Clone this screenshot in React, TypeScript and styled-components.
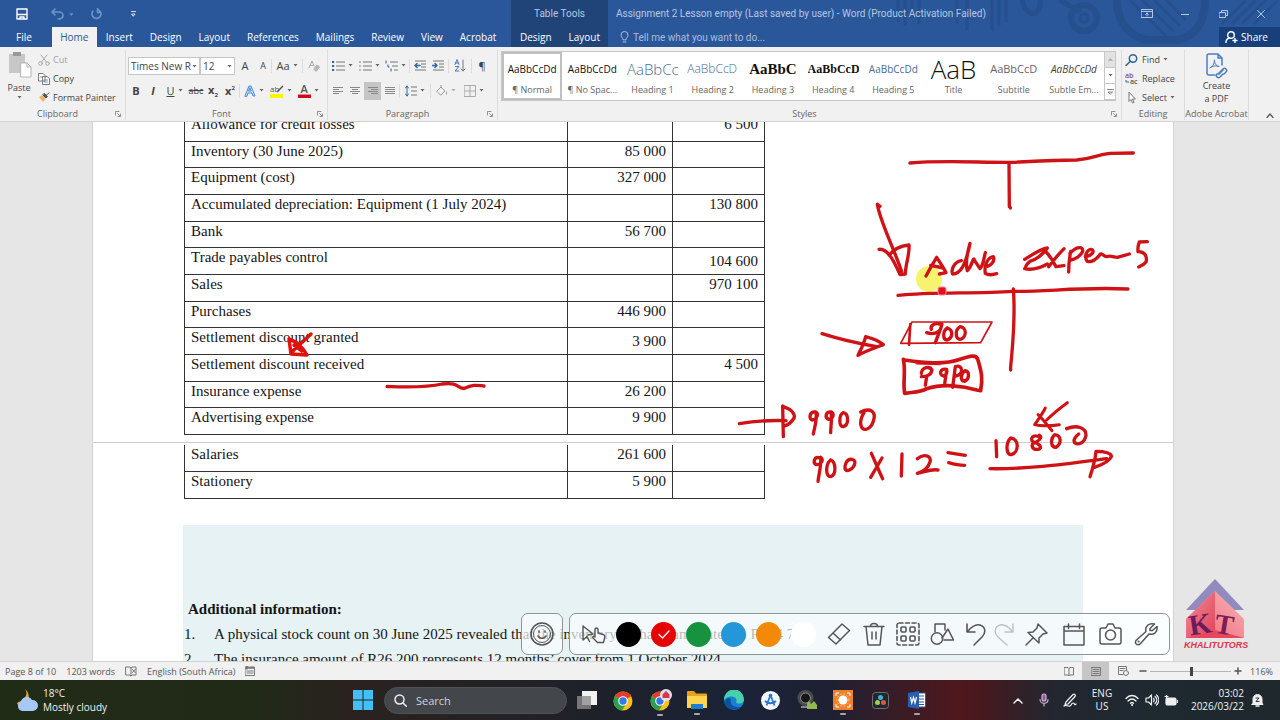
import React from "react";
import styled, { createGlobalStyle, css } from "styled-components";

const GlobalStyle = createGlobalStyle`
  * { box-sizing: border-box; }
  html, body { margin: 0; height: 100%; overflow: hidden; }
  #root { height: 100%; }
  body { font-family: "Open Sans", "Noto Sans", sans-serif; font-size: 9px; color: #444; background: #e6e6e6; }
  button, input, select { font: inherit; color: inherit; margin: 0; padding: 0; border: 0; background: none; outline: none; }
  button { display: inline-flex; align-items: center; justify-content: center; white-space: nowrap; }
  svg { display: block; flex: none; }
`;

const Screen = styled.div`
  display: flex;
  flex-direction: column;
  height: 100vh;
  overflow: hidden;
`;

/* ---------- header ---------- */
const Header = styled.header`
  position: relative;
  display: flex;
  flex: none;
  height: 47px;
  background: #2a579a;
  color: #fff;
`;
const HeaderArt = styled.svg`
  position: absolute;
  top: 0;
  right: 0;
`;
const HeaderBlock = styled.div<{ $width?: number; $dark?: boolean }>`
  position: relative;
  display: flex;
  flex-direction: column;
  ${(p) => (p.$width ? `flex: none; width: ${p.$width}px;` : "flex: 1; min-width: 0;")}
  background: ${(p) => (p.$dark ? "#204478" : "transparent")};
`;
const TitleRow = styled.div<{ $center?: boolean }>`
  display: flex;
  align-items: center;
  height: 27px;
  color: #b5c7e2;
  font-family: Roboto, "Open Sans", sans-serif;
  font-size: 10px;
  justify-content: ${(p) => (p.$center ? "center" : "flex-start")};
`;
const QuickAccess = styled.div`
  display: flex;
  align-items: center;
  gap: 12px;
  padding-left: 16px;
`;
const DocTitle = styled.span`
  flex: 1;
  padding-left: 8px;
  white-space: nowrap;
  overflow: hidden;
`;
const WindowButton = styled.button`
  width: 38px;
  height: 26px;
`;
const TabRow = styled.nav<{ $inset?: number }>`
  display: flex;
  height: 20px;
  gap: 1px;
  padding-left: ${(p) => p.$inset ?? 8}px;
`;
const Tab = styled.button<{ $active?: boolean; $file?: boolean }>`
  height: 20px;
  padding: 0 8px;
  font-size: 10px;
  min-width: ${(p) => (p.$active ? 45 : 0)}px;
  background: ${(p) => (p.$active ? "#f1f1f1" : "transparent")};
  color: ${(p) => (p.$active ? "#2a579a" : "#fff")};
  margin-right: ${(p) => (p.$file ? "11px" : "0")};
`;
const TellMe = styled.label`
  display: flex;
  flex: 1;
  align-items: center;
  gap: 4px;
  padding-left: 4px;
  color: #a9bddc;
  font-family: Roboto, "Open Sans", sans-serif;
  input {
    width: 240px;
    font-size: 10px;
  }
  input::placeholder {
    color: #a9bddc;
    opacity: 1;
  }
`;
const ShareButton = styled.button`
  width: 61px;
  gap: 3px;
  padding-right: 6px;
  background: #17407a;
  font-size: 10px;
`;

/* ---------- ribbon ---------- */
const Ribbon = styled.div`
  display: flex;
  flex: none;
  height: 75px;
  padding-top: 3px;
  background: #f1f1f1;
  border-bottom: 1px solid #d2d2d2;
`;
const Group = styled.section<{ $width?: number }>`
  display: flex;
  flex-direction: column;
  ${(p) => (p.$width ? `flex: none; width: ${p.$width}px;` : "flex: 1; min-width: 0;")}
  border-right: 1px solid #dcdcdc;
  height: 70px;
`;
const GroupBody = styled.div<{ $row?: boolean }>`
  flex: 1;
  min-height: 0;
  display: flex;
  flex-direction: ${(p) => (p.$row ? "row" : "column")};
`;
const GroupLabel = styled.div`
  display: flex;
  height: 13px;
  align-items: center;
  color: #666;
  span {
    flex: 1;
    text-align: center;
    white-space: nowrap;
  }
  svg {
    margin-right: 4px;
  }
`;
const PasteButton = styled.button`
  flex-direction: column;
  justify-content: flex-start;
  width: 36px;
  gap: 2px;
  padding: 1px 0 0 2px;
`;
const Stack = styled.div`
  display: flex;
  flex-direction: column;
`;
const Command = styled.button<{ $faded?: boolean }>`
  height: 19px;
  justify-content: flex-start;
  gap: 3px;
  padding-left: 2px;
  color: ${(p) => (p.$faded ? "#a0a0a0" : "#444")};
`;
const ToolRow = styled.div<{ $gap?: number }>`
  display: flex;
  align-items: center;
  height: 19px;
  margin-top: 6px;
  padding: 0 2px;
  gap: ${(p) => p.$gap ?? 2}px;
`;
const Combo = styled.div<{ $width: number }>`
  position: relative;
  width: ${(p) => p.$width}px;
  height: 18px;
  background: #fff;
  border: 1px solid #c6c6c6;
  select {
    appearance: none;
    width: 100%;
    height: 16px;
    padding: 0 8px 0 2px;
    overflow: hidden;
    font-size: 10px;
  }
  svg {
    position: absolute;
    right: 2px;
    top: 7px;
  }
`;
const Tool = styled.button<{ $on?: boolean; $width?: number }>`
  width: ${(p) => p.$width ?? 16}px;
  height: 18px;
  gap: 3px;
  background: ${(p) => (p.$on ? "#c5c5c5" : "transparent")};
`;
const Letter = styled.span<{ $bold?: boolean; $italic?: boolean; $underline?: boolean; $strike?: boolean }>`
  font-size: 11px;
  font-weight: ${(p) => (p.$bold ? 700 : 400)};
  font-style: ${(p) => (p.$italic ? "italic" : "normal")};
  text-decoration: ${(p) => (p.$underline ? "underline" : p.$strike ? "line-through" : "none")};
  sub, sup { font-size: 6px; line-height: 1; }
`;
const Small = styled(Letter)`
  font-size: 9px;
`;
const Rule = styled.i`
  width: 1px;
  height: 14px;
  background: #dcdcdc;
`;
const Gallery = styled.div`
  display: flex;
  height: 50px;
  margin: 1px 5px 0 3px;
  background: #fff;
  border: 1px solid #c6c6c6;
  overflow: hidden;
`;
const StyleItem = styled.button<{ $selected?: boolean }>`
  flex: 1 1 60px;
  min-width: 0;
  flex-direction: column;
  justify-content: flex-start;
  border: 2px solid ${(p) => (p.$selected ? "#c0c0c0" : "transparent")};
`;
const Preview = styled.span<{ $size: number; $color?: string; $serif?: boolean; $bold?: boolean; $light?: boolean; $italic?: boolean; $clip?: boolean }>`
  width: 51px;
  height: 28px;
  line-height: 30px;
  overflow: hidden;
  text-align: ${(p) => (p.$clip ? "left" : "center")};
  font-family: ${(p) => (p.$serif ? '"Liberation Serif", serif' : '"Open Sans", sans-serif')};
  font-size: ${(p) => p.$size}px;
  font-weight: ${(p) => (p.$bold ? 700 : p.$light ? 300 : 400)};
  font-style: ${(p) => (p.$italic ? "italic" : "normal")};
  color: ${(p) => p.$color ?? "#111"};
`;
const StyleName = styled.span`
  line-height: 16px;
  color: #666;
`;
const GalleryScroll = styled.div`
  display: flex;
  flex-direction: column;
  width: 11px;
  border-left: 1px solid #c6c6c6;
  button {
    flex: 1;
    border-bottom: 1px solid #c6c6c6;
  }
  button:first-child {
    background: #e2e2e2;
  }
`;
const PdfButton = styled.button`
  flex-direction: column;
  padding-top: 3px;
  line-height: 13px;
`;
const Collapse = styled.button`
  width: 20px;
  height: 12px;
  margin: 59px 0 0 11px;
`;

/* ---------- document ---------- */
const Workspace = styled.main`
  position: relative;
  flex: 1;
  min-height: 0;
  overflow: hidden;
  background: #e6e6e6;
`;
const Page = styled.article`
  margin: 0 106px 0 92px;
  height: 100%;
  background: #fff;
  border: solid #d4d4d4;
  border-width: 0 1px;
  overflow: hidden;
  color: #151515;
  font-family: "Liberation Serif", "Times New Roman", serif;
  font-size: 15px;
`;
const Ledger = styled.table<{ $first?: boolean }>`
  width: 581px;
  height: ${(p) => (p.$first ? 321 : 54)}px;
  margin: ${(p) => (p.$first ? "-8px" : "2px")} 0 0 91px;
  border-collapse: collapse;
  table-layout: fixed;
  td {
    border: 1px solid #333;
    padding: 0 6px 5px;
    vertical-align: top;
    line-height: 18px;
  }
  ${(p) =>
    !p.$first &&
    css`
      tr:first-child td {
        border-top: 0;
      }
    `}
`;
const Amount = styled.td<{ $low?: boolean }>`
  && {
    text-align: right;
    padding-top: ${(p) => (p.$low ? 4 : 0)}px;
    padding-bottom: ${(p) => (p.$low ? 1 : 5)}px;
  }
`;
const PageBreak = styled.hr`
  height: 1px;
  margin: 7px 0 0;
  border: 0;
  background: #cfcfcf;
`;
const Info = styled.section`
  margin: 26px 90px 0 90px;
  padding: 72px 0 0 5px;
  height: 200px;
  background: #e6f2f4;
  h2 {
    margin: 0;
    font-size: 15px;
    line-height: 25px;
  }
  ol {
    margin: 0 0 0 -4px;
    padding: 0;
    list-style: none;
  }
  li {
    display: flex;
    line-height: 25px;
    white-space: nowrap;
  }
  li span {
    width: 30px;
  }
`;
const Ink = styled.svg`
  position: absolute;
  top: 0;
  left: 0;
  pointer-events: none;
  fill: none;
  stroke: #cf1216;
  stroke-linecap: round;
  stroke-linejoin: round;
`;

/* ---------- annotation tools ---------- */
const Annotate = styled.div`
  position: absolute;
  right: 110px;
  bottom: 6px;
  display: flex;
  gap: 6px;
  color: #555;
`;
const Panel = styled.div`
  display: flex;
  align-items: center;
  justify-content: center;
  height: 42px;
  min-width: 42px;
  padding: 0 7px;
  border: 1px solid #8d9596;
  border-radius: 7px;
  background: rgba(250, 254, 255, 0.7);
`;
const Pen = styled.button<{ $width?: number }>`
  width: ${(p) => p.$width ?? 34}px;
  height: 32px;
`;
const Swatch = styled.label<{ $color: string }>`
  display: grid;
  place-items: center;
  width: 35px;
  height: 32px;
  input,
  svg {
    grid-area: 1 / 1;
  }
  input {
    appearance: none;
    width: 25px;
    height: 25px;
    border-radius: 50%;
    background: ${(p) => p.$color};
  }
`;
const Logo = styled.svg`
  position: absolute;
  right: 28px;
  bottom: 8px;
`;

/* ---------- status bar ---------- */
const StatusBar = styled.footer`
  display: flex;
  flex: none;
  align-items: center;
  height: 19px;
  padding: 0 7px 0 5px;
  background: #f1f1f1;
  border-top: 1px solid #d2d2d2;
  color: #555;
`;
const StatusLeft = styled.div`
  display: flex;
  flex: 1;
  align-items: center;
  gap: 10px;
  white-space: nowrap;
`;
const ViewButton = styled.button<{ $on?: boolean; $width?: number }>`
  width: ${(p) => p.$width ?? 27}px;
  height: 18px;
  background: ${(p) => (p.$on ? "#c6c6c6" : "transparent")};
`;
const ZoomStep = styled.button`
  width: 10px;
  height: 16px;
`;
const ZoomSlider = styled.input`
  && {
    appearance: none;
    width: 81px;
    height: 12px;
    margin: 0 2px;
    background: linear-gradient(#b5b5b5, #b5b5b5) center / 100% 1px no-repeat;
  }
  &::-webkit-slider-thumb {
    appearance: none;
    width: 3px;
    height: 9px;
    background: #444;
  }
`;
const ZoomValue = styled.span`
  width: 30px;
  text-align: right;
`;

/* ---------- taskbar ---------- */
const Taskbar = styled.footer`
  display: grid;
  grid-template-columns: 1fr auto 1fr;
  align-items: center;
  flex: none;
  height: 40px;
  color: #f2f2f2;
  font-size: 10px;
  background: linear-gradient(90deg, #212c17 0%, #202a17 20%, #29221f 27%, #262223 36%, #1d212b 48%, #1b2338 58%, #1f2032 65%, #381c26 70%, #4f181d 75%, #45191f 77%, #23262f 82%, #1e2930 90%, #1e282d 100%);
`;
const Weather = styled.button`
  justify-self: start;
  gap: 5px;
  padding-left: 16px;
  text-align: left;
  line-height: 14px;
`;
const Center = styled.div`
  display: flex;
  align-items: center;
  padding-left: 8px;
`;
const SearchPill = styled.label`
  display: flex;
  align-items: center;
  gap: 9px;
  width: 183px;
  height: 27px;
  margin: 0 2px 0 11px;
  padding-left: 9px;
  border-radius: 14px;
  background: #43474b;
  border: 1px solid #4f5254;
  font-size: 11px;
  input {
    width: 140px;
  }
  input::placeholder {
    color: #d2d2d2;
    opacity: 1;
  }
`;
const AppGrid = styled.div`
  display: grid;
  grid-template-columns: repeat(10, 1fr);
  width: 366px;
`;
const AppButton = styled.button<{ $running?: boolean }>`
  flex-direction: column;
  height: 40px;
  gap: 3px;
  padding-top: 5px;
  &::after {
    content: "";
    width: 6px;
    height: 2px;
    border-radius: 1px;
    background: ${(p) => (p.$running ? "#a5a9ad" : "transparent")};
  }
`;
const Tray = styled.div`
  display: flex;
  align-items: center;
  justify-self: end;
  padding-right: 10px;
  line-height: 13px;
`;
const TrayButton = styled.button<{ $width?: number }>`
  width: ${(p) => p.$width ?? 26}px;
  height: 32px;
`;
const Clock = styled.button`
  width: 63px;
  text-align: right;
  justify-content: flex-end;
  white-space: pre;
`;

/* ---------- icons ---------- */
type LineProps = { w: number; h?: number; box?: string; sw?: number; color?: string; children: React.ReactNode };
const Line = ({ w, h, box, sw = 1, color = "currentColor", children }: LineProps) => (
  <svg width={w} height={h ?? w} viewBox={box ?? `0 0 ${w} ${h ?? w}`} fill="none" stroke={color} strokeWidth={sw} strokeLinecap="round" strokeLinejoin="round" aria-hidden="true">
    {children}
  </svg>
);
const Caret = ({ color = "#666" }: { color?: string }) => (
  <svg width="5" height="3" viewBox="0 0 5 3" aria-hidden="true">
    <path d="M.5 0h4l-2 2.500z" fill={color} />
  </svg>
);
const Launcher = () => (
  <Line w={6} sw={0.8} color="#777">
    <path d="M.5 4V.5H4M2.500 2.500 5 5M5.500 3v2.500H3" />
  </Line>
);
const Bullets = ({ kind }: { kind: number }) => (
  <Line w={13} h={12} color="#777">
    <path d={kind === 2 ? "M5 2h8M7 6h6M9 10h4" : "M4 2h9M4 6h9M4 10h9"} strokeLinecap="butt" />
    <path d={kind === 2 ? "M1 1v2M3 5v2h1M6 9v2" : "M.7 2h.6M.7 6h.6M.7 10h.6"} stroke="#2a579a" strokeWidth={kind === 0 ? 2 : 1} />
  </Line>
);
const Indent = ({ right }: { right?: boolean }) => (
  <Line w={13} h={12} color="#777">
    <path d="M1 1h11M7 4h5M7 7h5M1 10h11" strokeLinecap="butt" />
    <path d={right ? "M0 5.500h5M3 3.500l2 2-2 2" : "M6 5.500H1M3 3.500l-2 2 2 2"} stroke="#2a6aa8" strokeWidth="1.500" />
  </Line>
);
const Align = ({ kind }: { kind: "l" | "c" | "r" | "j" }) => {
  const d = {
    l: "M1 1.500h10M1 3.500h6M1 5.500h10M1 7.500h6",
    c: "M1 1.500h10M3 3.500h6M1 5.500h10M3 7.500h6",
    r: "M1 1.500h10M4 3.500h7M1 5.500h10M4 7.500h7",
    j: "M1 1.500h10M1 3.500h10M1 5.500h10M1 7.500h10",
  }[kind];
  return (
    <Line w={12} h={10} color="#888">
      <path d={d} strokeLinecap="butt" />
    </Line>
  );
};
const Chrome = ({ badge }: { badge?: boolean }) => (
  <svg width="23" height="22" viewBox="0 0 23 22" aria-hidden="true">
    <circle cx="11" cy="12" r="9.500" fill="#fbc116" />
    <path d="M11 12 2.800 7.200A9.500 9.500 0 0 1 19.200 7.200z" fill="#e33b2e" />
    <path d="M2.800 7.200A9.500 9.500 0 0 0 10 21.400L14 15 11 12z" fill="#2da04e" />
    <circle cx="11" cy="12" r="4.800" fill="#fff" />
    <circle cx="11" cy="12" r="3.700" fill="#3478e5" />
    {badge && (
      <g>
        <circle cx="17" cy="6" r="6" fill="#e9e2e5" />
        <path d="m17 1.500 3.500 4h-7z" fill="#8580b0" />
        <path d="M13.500 5.500 17 3l3.500 2.500V9h-7z" fill="#dc3450" />
      </g>
    )}
  </svg>
);

type StyleDef = { name: string; text: string; size: number; color?: string; serif?: boolean; bold?: boolean; light?: boolean; italic?: boolean; clip?: boolean };
const STYLES: StyleDef[] = [
  { name: "¶ Normal", text: "AaBbCcDd", size: 10 },
  { name: "¶ No Spac...", text: "AaBbCcDd", size: 10 },
  { name: "Heading 1", text: "AaBbCc", size: 15, color: "#4a6d94", light: true, clip: true },
  { name: "Heading 2", text: "AaBbCcD", size: 12, color: "#4a6d94", light: true, clip: true },
  { name: "Heading 3", text: "AaBbC", size: 15, serif: true, bold: true },
  { name: "Heading 4", text: "AaBbCcD", size: 12, serif: true, bold: true, clip: true },
  { name: "Heading 5", text: "AaBbCcDd", size: 10, color: "#4a6d94" },
  { name: "Title", text: "AaB", size: 26, light: true },
  { name: "Subtitle", text: "AaBbCcD", size: 11, color: "#666" },
  { name: "Subtle Em...", text: "AaBbCcDd", size: 10, color: "#444", italic: true },
];

type Entry = { name: string; debit?: string; credit?: string; low?: boolean };
const ENTRIES: Entry[] = [
  { name: "Allowance for credit losses", credit: "6 500" },
  { name: "Inventory (30 June 2025)", debit: "85 000" },
  { name: "Equipment (cost)", debit: "327 000" },
  { name: "Accumulated depreciation: Equipment (1 July 2024)", credit: "130 800" },
  { name: "Bank", debit: "56 700" },
  { name: "Trade payables control", credit: "104 600", low: true },
  { name: "Sales", credit: "970 100" },
  { name: "Purchases", debit: "446 900" },
  { name: "Settlement discount granted", debit: "3 900", low: true },
  { name: "Settlement discount received", credit: "4 500" },
  { name: "Insurance expense", debit: "26 200" },
  { name: "Advertising expense", debit: "9 900" },
];
const ENTRIES_NEXT: Entry[] = [
  { name: "Salaries", debit: "261 600" },
  { name: "Stationery", debit: "5 900" },
];

const LedgerTable = ({ rows, first }: { rows: Entry[]; first?: boolean }) => (
  <Ledger $first={first}>
    <colgroup>
      <col />
      <col width="105" />
      <col width="92" />
    </colgroup>
    <tbody>
      {rows.map((r) => (
        <tr key={r.name}>
          <td>{r.name}</td>
          <Amount $low={r.low}>{r.debit}</Amount>
          <Amount $low={r.low}>{r.credit}</Amount>
        </tr>
      ))}
    </tbody>
  </Ledger>
);

const InkLayer = () => (
  <Ink width="1280" height="539" viewBox="0 122 1280 539" aria-hidden="true">
    <circle cx="929" cy="279" r="13" fill="#f6f04a" fillOpacity=".8" stroke="none" />
    <g transform="translate(800 140) scale(.33333)" strokeWidth="10">
      <path d="M330 69C430 60 540 68 640 67C700 64 760 60 830 60C880 56 890 44 930 40L1000 39" />
      <path d="M627 68 628 200M631 202v2" />
      <path d="M240 199 232 193C240 245 280 320 305 395" />
      <path d="M237 328C265 325 285 370 300 404L316 402C316 375 330 340 327 315C300 318 280 328 268 346" />
      <path d="M378 408C390 385 402 365 410 352C420 368 432 385 438 398L418 402M392 376 430 384" />
      <path d="M484 362C462 366 452 390 458 402C480 402 496 380 510 310C500 345 496 372 502 392C520 374 518 346 524 362L540 386C550 376 552 352 556 338M556 380C572 380 586 362 580 350C562 352 552 378 556 400C567 408 580 404 590 401" />
      <path d="M674 358C700 342 724 325 742 324C728 345 705 360 690 364M674 386C700 392 724 382 742 372M690 364C680 372 676 380 676 386" />
      <path d="M738 336C752 350 762 368 768 380L792 377M792 326C776 340 758 366 746 380" />
      <path d="M812 334C808 355 806 375 806 396M810 340C830 318 850 318 848 334C842 348 826 358 812 360M856 350C876 348 886 332 874 328C858 330 852 352 862 364C878 368 888 358 898 346C904 334 912 352 922 350C930 345 940 352 952 352L988 342" />
      <path d="M1042 305 1018 306C1012 320 1014 330 1014 335C1036 334 1042 352 1038 366C1032 374 1024 378 1016 381" />
      <path d="M294 466C400 455 520 462 640 454C740 456 840 440 984 447" />
      <path d="M640 447C646 520 640 600 632 680L632 690" />
    </g>
    <rect x="938" y="287" width="8" height="8" rx="2" fill="#e80f1b" stroke="#f08c94" strokeWidth="1" />
    <g transform="translate(730 310) scale(.33333)" strokeWidth="10">
      <path d="M276 71C320 85 370 98 440 110M384 136C396 112 404 94 407 80C430 86 450 96 460 104C440 112 405 124 384 136" />
      <path d="M512 100 546 36H786L752 98Z" strokeWidth="5" />
      <path d="M541 42 537 104" strokeWidth="8" />
      <path d="M590 68C606 74 628 70 632 56L636 42M630 42C612 38 600 48 604 58M634 50 616 98M652 54C638 62 638 88 650 90C668 86 672 60 652 54M690 50C674 60 676 86 690 88C710 84 712 52 690 50" strokeWidth="10" />
      <path d="M520 148C528 180 518 220 524 250M524 150C580 158 640 166 690 148C720 138 740 132 744 150C752 180 760 200 752 242L740 240C700 228 640 220 590 236C570 248 550 246 524 250M560 158 630 160" strokeWidth="11" />
      <path d="M574 190C576 170 600 168 606 180C604 196 588 200 574 200M590 200 586 226M650 178C630 174 626 194 640 198C650 196 652 188 650 178C648 200 644 212 644 226M668 232 676 170C698 162 704 192 676 198M706 182C690 192 690 212 704 214C720 206 718 184 706 182" strokeWidth="10" />
      <path d="M28 341C70 334 120 330 168 332M158 288 160 380M160 290C190 300 200 318 188 330C180 342 170 346 164 348" />
      <path d="M256 306C238 304 236 326 246 330C262 328 266 312 258 306C262 330 254 350 250 372M304 306C286 304 284 324 296 328C312 326 312 310 304 306C306 334 302 350 302 368M340 308C326 314 326 350 340 350C356 346 358 312 340 308M392 306C420 292 440 304 430 334C422 360 400 364 394 350C388 336 396 318 402 308" />
      <path d="M270 444C252 438 248 458 258 464C274 464 282 450 272 442C274 470 266 494 264 514M302 450C286 462 286 500 302 500C320 494 318 456 302 450M366 448C346 446 340 476 350 482C372 480 384 450 366 448M424 430C438 460 446 482 458 506M456 444 422 502M516 432 514 498M562 446C580 430 606 436 600 456C594 476 576 486 562 490C584 486 604 476 624 480M654 428 706 436M656 458C670 462 690 466 704 466" />
      <path d="M798 392 800 440M842 384C826 400 828 434 844 434C868 426 868 386 842 384M930 382C908 370 898 388 910 396C930 402 938 412 926 418C904 420 900 402 918 396C932 390 936 380 928 376M974 374C960 386 962 412 978 412C996 400 994 376 974 374M1010 356C1040 344 1068 352 1068 376C1064 400 1044 406 1034 398C1028 390 1038 378 1046 372" />
      <path d="M780 476C900 478 1020 460 1130 446M1080 500C1090 470 1096 446 1098 424C1124 424 1146 430 1144 440C1136 458 1110 466 1094 472" />
      <path d="M1012 278C990 294 970 310 950 330M946 294C936 314 922 332 914 344C936 350 960 348 988 344M924 314C936 324 952 346 966 362" strokeWidth="9" />
    </g>
    <path d="M311 334C304 341 298 345 292 352M289 339 291 354 307 355C303 348 298 342 289 339M294 345 302 351" strokeWidth="3.500" stroke="#e0100c" />
    <path d="M387 386.500C405 387 425 388 442 384C460 382 456 388 464 388.500C474 384 478 385.500 484 386" strokeWidth="3.300" />
  </Ink>
);

export default function App() {
  return (
    <Screen>
      <GlobalStyle />
      <Header>
        <HeaderArt width="400" height="47" viewBox="880 0 400 47" fill="none" stroke="#264f8e" aria-hidden="true">
          <path d="M898 0v22M905 0v26M912 0v18M919 0v24M957 0v24M967 0v30M992 0v30M999 0v26M1006 0v22" strokeWidth="3" />
          <path d="M1022 0c4 20 20 16 18 0M1060 0l20 12" strokeWidth="5" />
          <circle cx="1084" cy="18" r="13" strokeWidth="6" />
          <circle cx="1084" cy="18" r="4" strokeWidth="3" />
          <path d="M1117 0c0 24 14 37 30 40h30c18-3 28-18 28-40" strokeWidth="8" />
          <path d="M1130 0l36 36M1142 0l32 32M1154 0l26 26M1166 0l20 20M1232 24l24-24M1222 24l24-24M1242 24l24-24M1254 24l24-24" strokeWidth="3" />
        </HeaderArt>
        <HeaderBlock $width={511}>
          <TitleRow>
            <QuickAccess>
              <button aria-label="Save">
                <Line w={12} color="#fff" sw={1.4}><path d="M1 1h10v10H1zM1 6.500h10M4 11V9h4v2" /></Line>
              </button>
              <button aria-label="Undo">
                <Line w={34} h={12} color="#6f93c8" sw={1.6}><path d="M15 1 12 4l3 3M12 4h7a3.500 3 0 0 1 0 7h-1" /><path d="M30 5.500h3l-1.500 2z" fill="#6f93c8" strokeWidth=".5" /></Line>
              </button>
              <button aria-label="Repeat">
                <Line w={20} h={12} color="#6f93c8" sw={1.6}><path d="M11.500 1.500A4.500 4.500 0 1 1 7 3M11.500.500v4H15" /></Line>
              </button>
              <button aria-label="Customize Quick Access Toolbar">
                <Line w={18} h={6} color="#fff"><path d="M13.500.500h4M14 3h3l-1.500 2z" strokeWidth=".8" /></Line>
              </button>
            </QuickAccess>
          </TitleRow>
          <TabRow>
            <Tab $file>File</Tab>
            <Tab $active>Home</Tab>
            {["Insert", "Design", "Layout", "References", "Mailings", "Review", "View", "Acrobat"].map((t) => (
              <Tab key={t}>{t}</Tab>
            ))}
          </TabRow>
        </HeaderBlock>
        <HeaderBlock $width={97} $dark>
          <TitleRow $center>Table Tools</TitleRow>
          <TabRow $inset={1}>
            <Tab>Design</Tab>
            <Tab>Layout</Tab>
          </TabRow>
        </HeaderBlock>
        <HeaderBlock>
          <TitleRow>
            <DocTitle>Assignment 2 Lesson empty (Last saved by user) - Word (Product Activation Failed)</DocTitle>
            <WindowButton aria-label="Ribbon Display Options">
              <Line w={12} h={9}><path d="M.5.500h11v8H.5zM.5 2.500h11M6 7V4M4.500 5.500 6 4l1.500 1.500" /></Line>
            </WindowButton>
            <WindowButton aria-label="Minimize"><Line w={8} h={4}><path d="M0 2.500h8" /></Line></WindowButton>
            <WindowButton aria-label="Restore"><Line w={9} h={8}><path d="M.5 2.500h6v5h-6zM2.500 2.500v-2h6v5h-2" /></Line></WindowButton>
            <WindowButton aria-label="Close"><Line w={8}><path d="m.5.500 7 7M7.500.500l-7 7" /></Line></WindowButton>
          </TitleRow>
          <TabRow>
            <TellMe>
              <Line w={9} h={12}><path d="M3 8.500C3 7 1 6 1 4a3.500 3.500 0 0 1 7 0c0 2-2 3-2 4.500zM3 11h3" /></Line>
              <input aria-label="Tell me what you want to do" placeholder="Tell me what you want to do..." />
            </TellMe>
            <ShareButton>
              <Line w={13} h={12} sw={1.4}><circle cx="6" cy="4" r="3.300" /><path d="M1 11.500C1 9 2.500 7.500 4.500 7M8 9.500h4M10 7.500v4" /></Line>
              Share
            </ShareButton>
          </TabRow>
        </HeaderBlock>
      </Header>

      <Ribbon>
        <Group $width={126}>
          <GroupBody $row>
            <PasteButton>
              <Line w={26} h={28}>
                <path d="M3 3h16v19H3z" fill="#c9c6c6" stroke="none" />
                <path d="M7 1h8v4H7z" fill="#999" stroke="none" />
                <path d="M15 12h6l4 4v10H15z" fill="#fff" stroke="#b5b5b5" />
                <path d="M21 12v4h4" stroke="#b5b5b5" />
              </Line>
              Paste
              <Caret />
            </PasteButton>
            <Stack>
              <Command $faded>
                <Line w={12} color="#aaa"><circle cx="2.500" cy="9.500" r="1.800" /><circle cx="9.500" cy="9.500" r="1.800" /><path d="M3.500 8 9 1M8.500 8 3 1" /></Line>
                Cut
              </Command>
              <Command>
                <Line w={12} color="#777"><path d="M1 .500h4l2 2V8H1zM5 3.500h4l2.500 2v6H5z" fill="#fff" /><path d="M6.500 7h3M6.500 9h3M2.500 4h2" stroke="#4a7ab5" strokeWidth=".8" /></Line>
                Copy
              </Command>
              <Command>
                <Line w={12} h={11}><path d="m1 5 4-2 3 3-3 4z" fill="#e9b572" stroke="none" /><path d="m5 3 3 3 1.500-1.500-3-3zM8.500 3 11 1" fill="#555" stroke="#555" /></Line>
                Format Painter
              </Command>
            </Stack>
          </GroupBody>
          <GroupLabel><span>Clipboard</span><Launcher /></GroupLabel>
        </Group>

        <Group $width={202}>
          <GroupBody>
            <ToolRow $gap={0}>
              <Combo $width={72}><select aria-label="Font"><option>Times New Roman</option></select><Caret /></Combo>
              <Combo $width={35}><select aria-label="Font size"><option>12</option></select><Caret /></Combo>
              <Tool $width={20} aria-label="Increase font size"><Letter>A</Letter></Tool>
              <Tool aria-label="Decrease font size"><Small>A</Small></Tool>
              <Rule />
              <Tool $width={30} aria-label="Change case"><Letter>Aa</Letter><Caret /></Tool>
              <Rule />
              <Tool $width={22} aria-label="Clear formatting">
                <Line w={12} color="#aaa"><path d="m1 8 3-7 2 5M2 5.500h3" /><path d="m6 9 3-4 2.500 2-3 4z" fill="#c0b5c5" /></Line>
              </Tool>
            </ToolRow>
            <ToolRow $gap={1}>
              <Tool aria-label="Bold"><Letter $bold>B</Letter></Tool>
              <Tool aria-label="Italic"><Letter $italic $bold>I</Letter></Tool>
              <Tool $width={25} aria-label="Underline"><Letter $underline>U</Letter><Caret /></Tool>
              <Tool aria-label="Strikethrough"><Small $strike>abc</Small></Tool>
              <Tool aria-label="Subscript"><Letter $bold>x<sub>2</sub></Letter></Tool>
              <Tool aria-label="Superscript"><Letter $bold>x<sup>2</sup></Letter></Tool>
              <Rule />
              <Tool $width={26} aria-label="Text effects">
                <Line w={12} color="#4a86cc" sw={1}><path d="M1 11 5 1h2l4 10H9L8 8H4l-1 3zM4.800 6h2.400L6 3z" fill="#dbe9f8" /></Line>
                <Caret />
              </Tool>
              <Tool $width={26} aria-label="Highlight color">
                <svg width="14" height="14" viewBox="0 0 14 14" aria-hidden="true"><path d="M0 10h13v4H0z" fill="#fdf500" /><text x="0" y="8" fontSize="8" fill="#555">ab</text><path d="m7 8 6-6" stroke="#555" strokeWidth="1.500" /></svg>
                <Caret />
              </Tool>
              <Tool $width={26} aria-label="Font color">
                <svg width="13" height="14" viewBox="0 0 13 14" aria-hidden="true"><path d="M0 10.500h13V14H0z" fill="#d00c12" /><text x="2.500" y="9" fontSize="11" fontWeight="600" fill="#555">A</text></svg>
                <Caret />
              </Tool>
            </ToolRow>
          </GroupBody>
          <GroupLabel><span>Font</span><Launcher /></GroupLabel>
        </Group>

        <Group $width={170}>
          <GroupBody>
            <ToolRow $gap={2}>
              <Tool $width={25} aria-label="Bullets"><Bullets kind={0} /><Caret /></Tool>
              <Tool $width={24} aria-label="Numbering"><Bullets kind={1} /><Caret /></Tool>
              <Tool $width={24} aria-label="Multilevel list"><Bullets kind={2} /><Caret /></Tool>
              <Rule />
              <Tool aria-label="Decrease indent"><Indent /></Tool>
              <Tool aria-label="Increase indent"><Indent right /></Tool>
              <Rule />
              <Tool $width={18} aria-label="Sort">
                <Line w={12} h={13} color="#4a7ab5"><path d="m1 5.500 2-5 2 5M1.500 4h3M1.500 7.500h3.500l-4 4.500h4" /><path d="M9 1v11M7 10l2 2 2-2" stroke="#777" /></Line>
              </Tool>
              <Rule />
              <Tool aria-label="Show paragraph marks"><Letter>¶</Letter></Tool>
            </ToolRow>
            <ToolRow $gap={1}>
              <Tool aria-label="Align left"><Align kind="l" /></Tool>
              <Tool aria-label="Center"><Align kind="c" /></Tool>
              <Tool $on $width={17} aria-label="Align right"><Align kind="r" /></Tool>
              <Tool aria-label="Justify"><Align kind="j" /></Tool>
              <Rule />
              <Tool $width={28} aria-label="Line spacing">
                <Line w={12} color="#777"><path d="M6 2h6M6 6h6M6 10h6" strokeLinecap="butt" /><path d="M2 1v10M.5 3 2 1l1.500 2M.5 9 2 11l1.500-2" stroke="#2a6aa8" /></Line>
                <Caret />
              </Tool>
              <Rule />
              <Tool $width={28} aria-label="Shading">
                <Line w={12} color="#999"><path d="m1 6 4-4 4 4-4 4zM5 2V0M10.500 7v2" /></Line>
                <Caret color="#aaa" />
              </Tool>
              <Tool $width={26} aria-label="Borders">
                <Line w={12} color="#aaa"><path d="M.5.500h11v11H.5zM6 .500v11M.5 6h11" /></Line>
                <Caret />
              </Tool>
            </ToolRow>
          </GroupBody>
          <GroupLabel><span>Paragraph</span><Launcher /></GroupLabel>
        </Group>

        <Group>
          <GroupBody>
            <Gallery>
              {STYLES.map((s, i) => (
                <StyleItem key={s.name} $selected={i === 0}>
                  <Preview $size={s.size} $color={s.color} $serif={s.serif} $bold={s.bold} $light={s.light} $italic={s.italic} $clip={s.clip}>{s.text}</Preview>
                  <StyleName>{s.name}</StyleName>
                </StyleItem>
              ))}
              <GalleryScroll>
                <button aria-label="Previous styles"><Line w={5} h={3} sw={0.5} color="#aaa"><path d="M.5 2.500h4l-2-2z" fill="#aaa" /></Line></button>
                <button aria-label="Next styles"><Caret /></button>
                <button aria-label="More styles"><Line w={7} h={6} color="#666" sw={0.8}><path d="M.5.500h6M1.500 3h4l-2 2z" /></Line></button>
              </GalleryScroll>
            </Gallery>
          </GroupBody>
          <GroupLabel><span>Styles</span><Launcher /></GroupLabel>
        </Group>

        <Group $width={63}>
          <GroupBody>
            <Command>
              <Line w={15} h={12} color="#2f6299" sw={1.5}><circle cx="9" cy="4.500" r="3.700" /><path d="m6 7.500-4 4" /></Line>
              Find<Caret />
            </Command>
            <Command>
              <svg width="15" height="13" viewBox="0 0 15 13" aria-hidden="true"><text x="1" y="6" fontSize="7" fontWeight="600" fill="#7a4a98">ab</text><text x="6" y="12" fontSize="7" fontWeight="600" fill="#555">ac</text><path d="M2 8v2h3" fill="none" stroke="#2a6aa8" /></svg>
              Replace
            </Command>
            <Command>
              <Line w={15} h={12} color="#777"><path d="M5 .500v9l2-2 1.500 3.500 1.500-.7L8.500 7H11z" fill="#fff" /></Line>
              Select<Caret />
            </Command>
          </GroupBody>
          <GroupLabel><span>Editing</span></GroupLabel>
        </Group>

        <Group $width={64}>
          <GroupBody>
            <PdfButton>
              <Line w={22} h={26} color="#4a7fc0" sw={1.5}>
                <path d="M9 22H3a2 2 0 0 1-2-2V3a2 2 0 0 1 2-2h9l4 4v7M12 1v4h4" />
                <path d="M4 15c3-1 4.500-5 4.500-8M8.500 8c0 3 2 5 4.500 5.500M4.500 14.500c3-2 5-2 8-1" strokeWidth="1" />
                <path d="m13 20 4-4a2 2 0 0 1 3 3l-2 2M17 17l-4 4a2 2 0 0 0-2 0 2 2 0 0 0 3 3l3-3" />
              </Line>
              <span>Create</span>
              <span>a PDF</span>
            </PdfButton>
          </GroupBody>
          <GroupLabel><span>Adobe Acrobat</span></GroupLabel>
        </Group>
        <Collapse aria-label="Collapse the Ribbon"><Line w={8} h={5} sw={1.3} color="#555"><path d="M1 4.500 4 1l3 3.500" /></Line></Collapse>
      </Ribbon>

      <Workspace>
        <Page>
          <LedgerTable rows={ENTRIES} first />
          <PageBreak />
          <LedgerTable rows={ENTRIES_NEXT} />
          <Info>
            <h2>Additional information:</h2>
            <ol>
              <li><span>1.</span>A physical stock count on 30 June 2025 revealed that the inventory on hand amounted to R124 700</li>
              <li><span>2.</span>The insurance amount of R26 200 represents 12 months’ cover from 1 October 2024</li>
            </ol>
          </Info>
        </Page>
        <InkLayer />
        <Annotate>
          <Panel>
            <button aria-label="Reactions">
              <Line w={24} sw={1.6}><circle cx="12" cy="12" r="11" /><circle cx="12" cy="12" r="8.500" strokeWidth="1" /><path d="M8 14c2 3 6 3 8 0M9 9v1M15 9v1" /></Line>
            </button>
          </Panel>
          <Panel>
            <Pen aria-label="Pointer">
              <Line w={26} h={20} sw={1.4}>
                <path d="M2 2v14l4-3.500 2.500 5M2 2l10 8-5 1" />
                <path d="M14 11V5.500a1.500 1.500 0 0 1 3 0V9l5 1.500c2 .5 2 2 1.500 4l-1 4h-6L12 14c-1-1.500 1-2.500 2-1z" fill="#f6fbfc" />
              </Line>
            </Pen>
            {[
              ["Black", "#000"],
              ["Red", "#e50505"],
              ["Green", "#17923f"],
              ["Blue", "#2497d8"],
              ["Orange", "#f28a07"],
              ["White", "#fff"],
            ].map(([name, color]) => (
              <Swatch key={name} $color={color}>
                <input type="radio" name="ink" aria-label={name} defaultChecked={name === "Red"} />
                {name === "Red" && <Line w={12} h={9} color="#fff" sw={1.3}><path d="m1 4.500 3.500 3.500L11 1" /></Line>}
              </Swatch>
            ))}
            <Pen aria-label="Eraser" $width={36}><Line w={24} sw={1.5}><path d="M1.500 15.500 15 2l7.500 6.500L9 22zM6 11l7.500 7" /></Line></Pen>
            <Pen aria-label="Delete"><Line w={22} h={24} sw={1.5}><path d="M1 4.500h20M7.500 4.500C7.500.500 14.500.500 14.500 4.500M3 4.500 5 23h12l2-18.500M9 10v7M13 10v7" /></Line></Pen>
            <Pen aria-label="Select area">
              <Line w={24} sw={1.6}>
                <rect x="1" y="1" width="22" height="22" rx="2" strokeDasharray="4 2.500" />
                <rect x="5" y="5" width="5" height="5" rx="1" /><rect x="14" y="5" width="5" height="5" rx="1" /><rect x="5" y="14" width="5" height="5" rx="1" /><rect x="14" y="14" width="5" height="5" rx="1" />
              </Line>
            </Pen>
            <Pen aria-label="Shapes"><Line w={24} h={22} sw={1.5}><path d="M5 9V1h10v6M12 15l6-9 5.500 11H14" /><circle cx="7" cy="15.500" r="5.700" /></Line></Pen>
            <Pen aria-label="Undo"><Line w={20} h={23} sw={1.6}><path d="M1 1v8h8M1 9C6 3 10 1 14 2c6 2 6 8 2 12l-8 8" /></Line></Pen>
            <Pen aria-label="Redo" $width={22}><Line w={20} h={23} sw={1.4} color="#bcc2c3"><path d="M19 1v8h-8M19 9C14 3 10 1 6 2c-6 2-6 8-2 12l9 8" /></Line></Pen>
            <Pen aria-label="Pin" $width={42}><Line w={23} sw={1.5}><path d="M13 1l9 9-4 1-4 4v5L3 9.500l5-.500 4-4zM8 15l-7 7" /></Line></Pen>
            <Pen aria-label="Calendar"><Line w={22} h={23} sw={1.5}><path d="M1 3.500h20V22H1zM1 8h20M5.500 1v4.500M16.500 1v4.500" /></Line></Pen>
            <Pen aria-label="Camera" $width={38}><Line w={23} h={22} sw={1.5}><path d="M3 5h4l2-4h5l2 4h4a2 2 0 0 1 2 2v12a2 2 0 0 1-2 2H3a2 2 0 0 1-2-2V7a2 2 0 0 1 2-2z" /><circle cx="11.500" cy="12" r="5" /></Line></Pen>
            <Pen aria-label="Settings" $width={33}><Line w={24} sw={1.5}><path d="M20.500 2 16 6.500v2h2.500L23 4.500c1 5-3 9-8 7.500L6.500 21.500c-3 3-7-.500-4-3.500L12 9.500C10.500 4.500 15 .500 20.500 2z" /><path d="M4.500 19.500h.1" strokeWidth="2" /></Line></Pen>
          </Panel>
        </Annotate>
        <Logo width="70" height="74" viewBox="0 0 70 74" aria-label="Khalitutors">
          <defs>
            <linearGradient id="lf" x1="0" x2="1" y1="0" y2="1"><stop offset="0" stopColor="#f58d96" /><stop offset="1" stopColor="#e0425a" /></linearGradient>
            <linearGradient id="rt" x1="1" x2="0" y1="0" y2="1"><stop offset="0" stopColor="#f8b5b7" /><stop offset="1" stopColor="#ee6374" /></linearGradient>
          </defs>
          <path d="M33 0 62 31H4z" fill="#918cbd" />
          <path d="M33 12 4 40v19h58V40z" fill="url(#rt)" />
          <path d="M33 12 4 40v19l29-8z" fill="url(#lf)" />
          <path d="M33 51 4 59h58z" fill="#e8465b" />
          <text x="7" y="55" fontFamily="Liberation Serif" fontWeight="700" fontSize="29" fill="#6c1c5c" transform="rotate(-9 18 46)">K</text>
          <text x="33" y="55" fontFamily="Liberation Serif" fontWeight="700" fontSize="28" fill="#7a2055" transform="rotate(9 42 46)">T</text>
          <text x="2" y="69" fontFamily="Liberation Sans" fontWeight="700" fontStyle="italic" fontSize="9" fill="#e2334b">KHALITUTORS</text>
        </Logo>
      </Workspace>

      <StatusBar>
        <StatusLeft>
          <span>Page 8 of 10</span>
          <span>1203 words</span>
          <Line w={12} h={11} color="#777"><path d="M1 1h4l1 1v8L5 9H1zM6 2l1-1h4v8H7l-1 1M7.500 3.500l2.500 3M10 3.500l-2.500 3" /></Line>
          <span>English (South Africa)</span>
          <Line w={10} color="#777"><path d="M.5 2h9v7.500h-9zM2 5h6M2 7h6" /><circle cx="2" cy="1.500" r="1.500" fill="#777" /><path d="M5 1.500h4" strokeWidth="2" /></Line>
        </StatusLeft>
        <ViewButton aria-label="Read Mode"><Line w={10} h={9} color="#777"><path d="M.5.500H4l1 1v7l-1-.5H.5zM5 1.500l1-1h3.500v7.500H6l-1 .5" /></Line></ViewButton>
        <ViewButton $on aria-label="Print Layout"><Line w={10} h={9} color="#777"><path d="M.5.500h9v8h-9zM2 2.500h6M2 4.500h6M2 6.500h6" /></Line></ViewButton>
        <ViewButton aria-label="Web Layout" $width={29}><Line w={11} h={10} color="#777"><path d="M5 8.500H.5v-8h8V4M2 2.500h5M2 4.500h3" /><circle cx="8" cy="7" r="2.500" /></Line></ViewButton>
        <ZoomStep aria-label="Zoom out"><Line w={8} h={2} sw={1.5} color="#555"><path d="M1 1h6" /></Line></ZoomStep>
        <ZoomSlider type="range" min="10" max="190" defaultValue="102" aria-label="Zoom" />
        <ZoomStep aria-label="Zoom in"><Line w={8} sw={1.5} color="#555"><path d="M1 4h6M4 1v6" /></Line></ZoomStep>
        <ZoomValue>116%</ZoomValue>
      </StatusBar>

      <Taskbar>
        <Weather>
          <svg width="22" height="23" viewBox="0 0 22 23" aria-hidden="true">
            <path d="M9 0c3 5 2 9-8 14 0 2 4 4 8 2s6-11 0-16z" fill="#f4a93c" />
            <path d="M6 22a5 5 0 0 1-1-9.500 6 6 0 0 1 11-1.500 5.500 5.500 0 0 1 1 11z" fill="#a5c8f5" />
          </svg>
          <span>18°C<br />Mostly cloudy</span>
        </Weather>
        <Center>
          <button aria-label="Start">
            <svg width="20" height="20" viewBox="0 0 20 20" aria-hidden="true"><path d="M0 0h9.500v9.500H0zM10.500 0H20v9.500h-9.500zM0 10.500h9.500V20H0zM10.500 10.500H20V20h-9.500z" fill="#40c0f4" /></svg>
          </button>
          <SearchPill>
            <Line w={13} sw={1.5} color="#eee"><circle cx="5.500" cy="5.500" r="4.500" /><path d="m9 9 3.300 3.300" /></Line>
            <input aria-label="Search" placeholder="Search" />
          </SearchPill>
          <AppGrid>
            <AppButton aria-label="Task View"><svg width="20" height="20" viewBox="0 0 20 20" aria-hidden="true"><path d="M5 1h15v14H5z" fill="#f2f2f2" /><path d="M0 6h14v13H0z" fill="#8c8c8c" fillOpacity=".8" /></svg></AppButton>
            <AppButton aria-label="Chrome"><Chrome /></AppButton>
            <AppButton aria-label="Chrome profile" $running><Chrome badge /></AppButton>
            <AppButton aria-label="File Explorer" $running><svg width="20" height="20" viewBox="0 0 20 20" aria-hidden="true"><path d="M0 2q0-1 1-1h6l2 2.500h10q1 0 1 1V18H0z" fill="#e9a21c" /><path d="M0 6h20v11q0 1-1 1H1q-1 0-1-1z" fill="#fdd44f" /><path d="M4 14h12v5H4z" fill="#1d7fcf" /></svg></AppButton>
            <AppButton aria-label="Edge"><svg width="20" height="20" viewBox="0 0 20 20" aria-hidden="true"><circle cx="10" cy="10" r="10" fill="#1b7fd4" /><path d="M0 10A10 10 0 0 1 20 9c0 4-3 5-6 4.500-3-.500-1-2-1.500-4C11.500 6 4 5 0 10z" fill="#45d0b0" /><path d="M7 9c-2 5 3 9 9 8-5 5-14 2-15.500-4C1 9 4 7 7 9z" fill="#0d519f" /></svg></AppButton>
            <AppButton aria-label="Android Studio"><svg width="19" height="19" viewBox="0 0 19 19" aria-hidden="true"><circle cx="9.500" cy="9.500" r="9.500" fill="#f2f7fc" /><path d="M9.500 4 5.500 14.500M9.500 4l4 10.500M4 10c3 3 8 3 11 0" fill="none" stroke="#2a76c9" strokeWidth="1.800" /><circle cx="9.500" cy="4.500" r="1.800" fill="#2a76c9" /></svg></AppButton>
            <AppButton aria-label="Webcam"><svg width="20" height="20" viewBox="0 0 20 20" aria-hidden="true"><circle cx="8.500" cy="8" r="8" fill="#4b4b4d" /><circle cx="8.500" cy="8" r="5" fill="#161616" stroke="#8c8c8c" /><path d="M4 17h8" stroke="#888" strokeWidth="2" /><path d="M10 19v-6l2-2 2 3 3-3 3 4v4z" fill="#8fb84e" /></svg></AppButton>
            <AppButton aria-label="Screen recorder" $running><svg width="20" height="20" viewBox="0 0 20 20" aria-hidden="true"><path d="M0 0h20v20H0z" fill="#f0802a" /><circle cx="10" cy="10" r="4.500" fill="#fff" /><circle cx="10" cy="10" r="6" fill="none" stroke="#fbd2a8" strokeDasharray="1.500 2" /><path d="M3 6V3h3M14 3h3v3M17 14v3h-3M6 17H3v-3" fill="none" stroke="#fff" /></svg></AppButton>
            <AppButton aria-label="DaVinci Resolve"><svg width="17" height="17" viewBox="0 0 17 17" aria-hidden="true"><rect x=".5" y=".5" width="16" height="16" rx="3" fill="#22272e" stroke="#6d7276" /><circle cx="8.500" cy="5.500" r="2.500" fill="#3cb4d8" /><circle cx="5.500" cy="10.500" r="2.500" fill="#a6ce4c" /><circle cx="11.500" cy="10.500" r="2.500" fill="#e2524a" /></svg></AppButton>
            <AppButton aria-label="Word" $running><svg width="18" height="20" viewBox="0 -1 18 20" aria-hidden="true"><path d="M9 2h8.500v14H9z" fill="#fff" stroke="#2a5699" /><path d="M11 5h5M11 8h5M11 11h5M11 13.500h5" stroke="#2a5699" /><path d="M0 2 11 0v18L0 16z" fill="#2a5fb0" /><path d="m2.500 6 1.300 6L5.500 6.500 7 12l1.500-6" fill="none" stroke="#fff" strokeWidth="1.200" /></svg></AppButton>
          </AppGrid>
        </Center>
        <Tray>
          <TrayButton aria-label="Show hidden icons"><Line w={10} h={7} sw={1.5}><path d="m1 6 4-4 4 4" /></Line></TrayButton>
          <TrayButton aria-label="Microphone"><Line w={10} h={14} sw={1.1}><rect x="3" y="1" width="4" height="7" rx="2" fill="#8c5b9e" stroke="#d5b8df" /><path d="M1 6.500c0 5 8 5 8 0M5 10.500V13" stroke="#d5b8df" /></Line></TrayButton>
          <TrayButton aria-label="Pen"><Line w={14} sw={1.2}><path d="M3 9 10 1.500c1.500-1 3 .5 2 2L5 11l-3 .500zM1 13c2-2 4 1 6 0s1-3 3-3 1 3 3 1" /></Line></TrayButton>
          <TrayButton $width={38} aria-label="Keyboard language"><span>ENG<br />US</span></TrayButton>
          <TrayButton $width={22} aria-label="Wi-Fi"><Line w={14} h={12} sw={1.3}><path d="M1 4.500c3.500-4 8.500-4 12 0M3 7c2.500-2.500 5.500-2.500 8 0M5.500 9.200c1-1 2-1 3 0" /><path d="M7 11h.1" strokeWidth="2" /></Line></TrayButton>
          <TrayButton $width={18} aria-label="Volume"><Line w={14} h={12} sw={1.2}><path d="M1 4h2.500L6.500 1v10l-3-3H1zM8.500 4.500c1 1 1 2 0 3M10 2.500c2.500 2 2.500 5 0 7M11.500 1c3 3 3 7 0 10" /></Line></TrayButton>
          <TrayButton $width={20} aria-label="Battery"><Line w={14} h={11} sw={1.2}><rect x="2" y="3" width="10" height="7" rx="1.500" fill="#eee" /><path d="M13.500 5.500v2M2.500 0v4M1 1.500h3" /></Line></TrayButton>
          <Clock>{"03:02\n2026/03/22"}</Clock>
          <TrayButton aria-label="Notifications"><Line w={13} h={14}><path d="M2 10V6a4.500 4.500 0 0 1 9 0v4l1 1.500H1z" fill="#eee" /><path d="M5 13h3" strokeWidth="1.500" /><path d="M5 5h3L5 8.500h3" stroke="#333" /></Line></TrayButton>
        </Tray>
      </Taskbar>
    </Screen>
  );
}
